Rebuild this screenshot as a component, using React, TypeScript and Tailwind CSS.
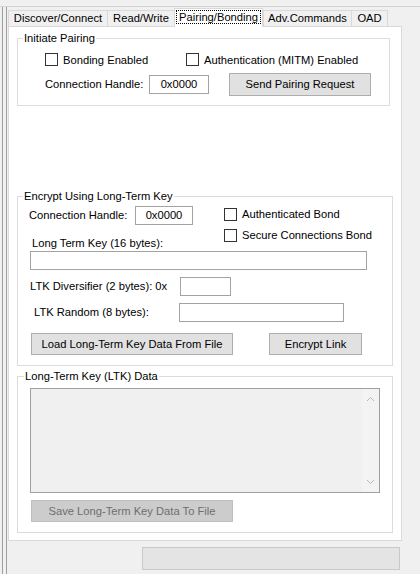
import React from "react";

function Checkbox({ label }: { label: string }) {
  return (
    <div className="flex items-center gap-[5px]">
      <span className="w-[13px] h-[13px] shrink-0 border border-[#333333] bg-white" />
      <span className="leading-[14px]">{label}</span>
    </div>
  );
}

function Button({ label, className = "", disabled = false }: { label: string; className?: string; disabled?: boolean }) {
  return (
    <div
      className={
        "h-[22px] flex items-center justify-center border " +
        (disabled ? "bg-[#cccccc] border-[#bfbfbf] text-[#6e6e6e] " : "bg-[#e1e1e1] border-[#adadad] text-black ") +
        className
      }
    >
      {label}
    </div>
  );
}

function Field({ value = "", className = "" }: { value?: string; className?: string }) {
  return (
    <div className={"h-[19px] bg-white border border-[#a3a3a3] flex items-center justify-center " + className}>
      {value}
    </div>
  );
}

function Tab({ label, width, selected = false }: { label: string; width: string; selected?: boolean }) {
  if (selected) {
    return (
      <div className={"relative z-10 -mb-px h-[19px] bg-white border-x border-t border-[#d9d9d9] flex items-start justify-center pt-[1px] " + width}>
        <span className="border border-dotted border-black px-[2px] leading-[12px]">{label}</span>
      </div>
    );
  }
  return (
    <div className={"h-[16px] bg-[#f0f0f0] border-l border-t border-[#d9d9d9] flex items-center justify-center " + width}>
      {label}
    </div>
  );
}

export default function App() {
  return (
    <div className="w-[420px] h-[574px] overflow-hidden bg-[#f0f0f0] flex flex-col text-[11.2px] text-black font-['Liberation_Sans',Arial,sans-serif]">
      <div className="h-[7px] shrink-0 border-b border-[#d4d4d4]" />
      <div className="flex-1 flex">
        <div className="w-[8px] shrink-0">
          <div className="ml-[2px] w-[5px] h-full border-x border-[#a0a0a0]" />
        </div>
        <div className="flex-1 flex flex-col pt-[1px]">
          {/* tab strip */}
          <div className="h-[18px] flex items-end">
            <Tab label="Discover/Connect" width="w-[99px]" />
            <Tab label="Read/Write" width="w-[67px]" />
            <Tab label="Pairing/Bonding" width="w-[89px]" selected />
            <Tab label="Adv.Commands" width="w-[88px]" />
            <div className="h-[16px] w-[37px] bg-[#f0f0f0] border-x border-t border-[#d9d9d9] flex items-center justify-center">OAD</div>
          </div>

          {/* tab page */}
          <div className="w-[394px] h-[515px] bg-white border border-[#d9d9d9]">
            <fieldset className="mt-[4px] ml-[8px] w-[373px] border border-[#dcdcdc] pb-[9px]">
              <legend className="ml-[5px] px-[1px] leading-[14px]">Initiate Pairing</legend>
              <div className="mt-[8px] h-[13px] flex items-center">
                <div className="ml-[27px] w-[141px]">
                  <Checkbox label="Bonding Enabled" />
                </div>
                <Checkbox label="Authentication (MITM) Enabled" />
              </div>
              <div className="mt-[7px] h-[23px] flex items-center">
                <span className="ml-[27px] w-[104px]">Connection Handle:</span>
                <Field value="0x0000" className="w-[60px]" />
                <Button label="Send Pairing Request" className="ml-[20px] w-[142px] h-[23px]" />
              </div>
            </fieldset>

            <fieldset className="mt-[83px] ml-[8px] w-[376px] border border-[#dcdcdc] pb-[10px]">
              <legend className="ml-[5px] px-[1px] leading-[14px]">Encrypt Using Long-Term Key</legend>
              <div className="flex">
                <div className="w-[206px] shrink-0">
                  <div className="mt-[3px] h-[19px] flex items-center">
                    <span className="ml-[11px] w-[106px]">Connection Handle:</span>
                    <Field value="0x0000" className="w-[58px]" />
                  </div>
                  <div className="mt-[11px] ml-[14px] leading-[14px]">Long Term Key (16 bytes):</div>
                </div>
                <div className="mt-[4px] flex flex-col gap-[7px]">
                  <Checkbox label="Authenticated Bond" />
                  <Checkbox label="Secure Connections Bond" />
                </div>
              </div>
              <Field className="mt-[1px] ml-[12px] w-[337px] h-[18px]" />
              <div className="mt-[7px] h-[19px] flex items-center">
                <span className="ml-[12px] w-[150px]">LTK Diversifier (2 bytes): 0x</span>
                <Field className="w-[51px]" />
              </div>
              <div className="mt-[7px] h-[19px] flex items-center">
                <span className="ml-[16px] w-[145px]">LTK Random (8 bytes):</span>
                <Field className="w-[165px]" />
              </div>
              <div className="mt-[11px] flex">
                <Button label="Load Long-Term Key Data From File" className="ml-[13px] w-[202px]" />
                <Button label="Encrypt Link" className="ml-[36px] w-[93px]" />
              </div>
            </fieldset>

            <fieldset className="mt-[3px] ml-[8px] w-[376px] border border-[#dcdcdc] pb-[10px]">
              <legend className="ml-[6px] px-[1px] leading-[14px]">Long-Term Key (LTK) Data</legend>
              <div className="mt-[5px] ml-[12px] w-[350px] h-[105px] bg-[#f0f0f0] border border-[#a0a0a0] flex justify-end">
                <div className="w-[17px] h-full bg-[#f3f3f3] flex flex-col items-center justify-between py-[7px]">
                  <svg width="9" height="6" viewBox="0 0 9 6">
                    <polyline points="1,5 4.5,1.5 8,5" fill="none" stroke="#b8b8b8" strokeWidth="1" />
                  </svg>
                  <svg width="9" height="6" viewBox="0 0 9 6">
                    <polyline points="1,1 4.5,4.5 8,1" fill="none" stroke="#b8b8b8" strokeWidth="1" />
                  </svg>
                </div>
              </div>
              <Button label="Save Long-Term Key Data To File" disabled className="mt-[7px] ml-[13px] w-[202px]" />
            </fieldset>
          </div>

          {/* status area */}
          <div className="mt-[6px] ml-[134px] w-[258px] h-[23px] bg-[#e4e4e4] border border-[#c9c9c9]" />
        </div>
      </div>
    </div>
  );
}
